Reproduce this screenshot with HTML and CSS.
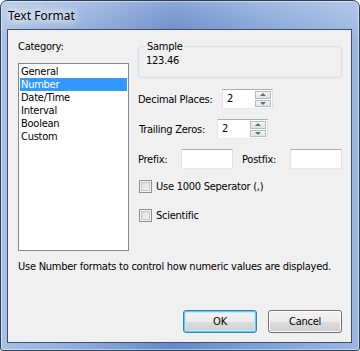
FILE: index.html
```html
<!DOCTYPE html>
<html lang="en">
<head>
  <meta charset="UTF-8">
  <title>Text Format</title>
  <link rel="stylesheet" href="styles.css">
</head>
<body>
  <div class="window">
    <div class="titlebar"><span class="title">Text Format</span></div>

    <div class="client">
      <div class="main">
        <div class="category">
          <div class="label">Category:</div>
          <ul class="listbox">
            <li>General</li>
            <li class="selected">Number</li>
            <li>Date/Time</li>
            <li>Interval</li>
            <li>Boolean</li>
            <li>Custom</li>
          </ul>
        </div>

        <div class="options">
          <fieldset class="sample">
            <legend>Sample</legend>
            <div class="sample-value">123.46</div>
          </fieldset>

          <div class="field-row">
            <span class="decimal-label">Decimal Places:</span>
            <div class="spin">
              <span class="spin-value">2</span>
              <div class="spin-buttons">
                <span class="spin-btn up"></span>
                <span class="spin-btn down"></span>
              </div>
            </div>
          </div>

          <div class="field-row">
            <span class="trailing-label">Trailing Zeros:</span>
            <div class="spin">
              <span class="spin-value">2</span>
              <div class="spin-buttons">
                <span class="spin-btn up"></span>
                <span class="spin-btn down"></span>
              </div>
            </div>
          </div>

          <div class="field-row">
            <span class="prefix-label">Prefix:</span>
            <div class="textbox"></div>
            <span class="postfix-label">Postfix:</span>
            <div class="textbox"></div>
          </div>

          <div class="check-row first">
            <span class="checkbox"></span>
            <span>Use 1000 Seperator (,)</span>
          </div>
          <div class="check-row">
            <span class="checkbox"></span>
            <span>Scientific</span>
          </div>
        </div>
      </div>

      <p class="hint">Use Number formats to control how numeric values are displayed.</p>

      <div class="buttons">
        <button class="button default">OK</button>
        <button class="button">Cancel</button>
      </div>
    </div>
  </div>
</body>
</html>
```

FILE: styles.css
```css
* {
  box-sizing: border-box;
}

body {
  margin: 0;
  background: #fff;
  font-family: "DejaVu Sans Condensed", Tahoma, sans-serif;
  font-size: 11px;
  letter-spacing: -0.25px;
  color: #000;
}

.window {
  width: 360px;
  height: 351px;
  display: flex;
  flex-direction: column;
  padding: 0 7px 7px 6px;
  border: 1px solid #2f3f55;
  border-radius: 7px 7px 3px 3px;
  background:
    linear-gradient(180deg, rgba(255,255,255,0.25), rgba(255,255,255,0) 40px),
    linear-gradient(90deg, #a9c2e5 0%, #8eacdb 22%, #6589c8 48%, #7a9dd4 68%, #9bb7e0 100%);
  box-shadow: inset 0 0 0 1px rgba(255,255,255,0.45);
}

.titlebar {
  height: 28px;
  flex-shrink: 0;
  display: flex;
  align-items: center;
  padding-left: 1px;
  font-family: "Noto Sans", "Open Sans", sans-serif;
  font-size: 12px;
  letter-spacing: 0;
}

.title {
  color: #000;
  text-shadow: 0 0 6px #fff, 0 0 10px #fff, 0 0 14px rgba(255,255,255,0.9);
}

.client {
  flex: 1;
  min-height: 0;
  padding: 10px 9px 0 10px;
  background: #f0f0f0;
  border: 1px solid #3d4f6b;
}

.main {
  display: flex;
  gap: 9px;
}

.category {
  width: 111px;
}

.label {
  line-height: 13px;
  margin-bottom: 10px;
}

.listbox {
  margin: 0;
  padding: 1px;
  list-style: none;
  height: 188px;
  background: #fff;
  border: 1px solid #828790;
}

.listbox li {
  line-height: 13px;
  padding-left: 1px;
}

.listbox .selected {
  background: #3399ff;
  color: #fff;
}

.options {
  width: 204px;
}

.sample {
  margin: 0;
  padding: 1px 7px 10px;
  border: 1px solid #d5dfe5;
  border-radius: 3px;
}

.sample legend {
  padding: 0 1px;
  line-height: 13px;
}

.sample-value {
  line-height: 13px;
}

.field-row {
  display: flex;
  align-items: center;
  height: 20px;
  margin-top: 10px;
}

.field-row:first-of-type {
  margin-top: 11px;
}

.decimal-label {
  width: 84px;
}

.trailing-label {
  width: 79px;
  padding-left: 1px;
}

.prefix-label {
  width: 43px;
}

.postfix-label {
  width: 48px;
  margin-left: 9px;
}

.spin,
.textbox {
  height: 20px;
  background: #fff;
  border: 1px solid;
  border-color: #abadb3 #dbdfe6 #e3e9ef #e2e3ea;
}

.textbox {
  width: 52px;
}

.spin {
  width: 51px;
  display: flex;
}

.spin-value {
  flex: 1;
  padding-left: 4px;
  line-height: 18px;
}

.spin-buttons {
  width: 17px;
  display: flex;
  flex-direction: column;
  gap: 1px;
  padding: 1px 1px 1px 0;
}

.spin-btn {
  flex: 1;
  display: flex;
  align-items: center;
  justify-content: center;
  border: 1px solid #b9b9b9;
  background: linear-gradient(180deg, #f6f6f6, #e2e2e2);
}

.spin-btn::after {
  content: "";
  border-left: 3px solid transparent;
  border-right: 3px solid transparent;
}

.up::after {
  border-bottom: 3px solid #4c6ea8;
}

.down::after {
  border-top: 3px solid #4c6ea8;
}

.check-row {
  display: flex;
  align-items: center;
  gap: 4px;
  height: 13px;
  margin-top: 16px;
  padding-left: 1px;
}

.check-row.first {
  margin-top: 11px;
}

.checkbox {
  width: 13px;
  height: 13px;
  border: 1px solid #8e8f8f;
  background: linear-gradient(135deg, #dadada, #f7f7f7);
  box-shadow: inset 0 0 0 1px #f2f2f2, inset 0 0 0 2px #c8c8c8;
}

.hint {
  margin: 9px 0 0;
  line-height: 13px;
  white-space: nowrap;
}

.buttons {
  display: flex;
  justify-content: flex-end;
  gap: 11px;
  margin-top: 37px;
}

.button {
  width: 74px;
  height: 23px;
  padding: 0;
  font-family: inherit;
  font-size: 11px;
  letter-spacing: inherit;
  color: #000;
  border: 1px solid #707070;
  border-radius: 3px;
  background: linear-gradient(180deg, #f2f2f2 0%, #ebebeb 50%, #dddddd 51%, #cfcfcf 100%);
  box-shadow: inset 0 0 0 1px #fcfcfc;
}

.button.default {
  border-color: #3c7fb1;
  box-shadow: inset 0 0 0 1px #48d5f8, inset 0 0 0 2px #c8e8f7;
}
```
